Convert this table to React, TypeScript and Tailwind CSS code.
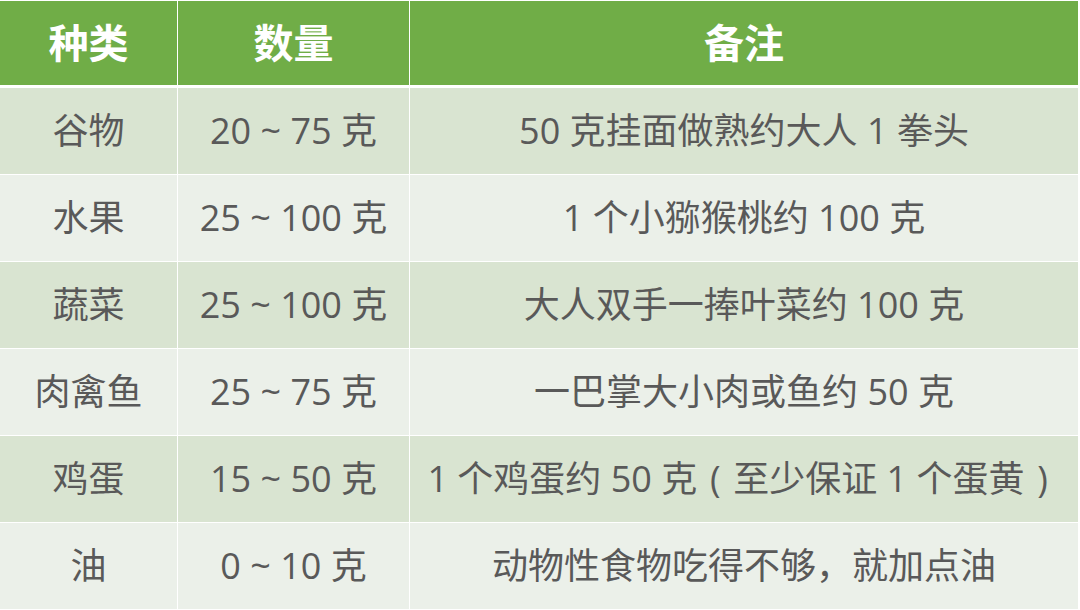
import React from 'react';

const Paren = ({ c }: { c: string }) => (
  <span className="inline-block w-[1em] text-center">{c}</span>
);

const rows: { kind: string; amount: string; note: React.ReactNode }[] = [
  { kind: '谷物', amount: '20 ~ 75 克', note: '50 克挂面做熟约大人 1 拳头' },
  { kind: '水果', amount: '25 ~ 100 克', note: '1 个小猕猴桃约 100 克' },
  { kind: '蔬菜', amount: '25 ~ 100 克', note: '大人双手一捧叶菜约 100 克' },
  { kind: '肉禽鱼', amount: '25 ~ 75 克', note: '一巴掌大小肉或鱼约 50 克' },
  {
    kind: '鸡蛋',
    amount: '15 ~ 50 克',
    note: (
      <>
        1 个鸡蛋约 50 克<Paren c="(" />至少保证 1 个蛋黄<Paren c=")" />
      </>
    ),
  },
  { kind: '油', amount: '0 ~ 10 克', note: '动物性食物吃得不够，就加点油' },
];

const font = { fontFamily: '"Open Sans", "Noto Sans CJK SC", sans-serif' };

export default function App() {
  return (
    <div className="w-[1080px] h-[610px] bg-white pt-[1px] pr-[2px]" style={font}>
      <div className="grid grid-cols-[177px_231px_1fr] gap-x-[1px] h-[84px] mb-[3px]">
        {['种类', '数量', '备注'].map((h) => (
          <div
            key={h}
            className="bg-[#70ad47] flex items-center justify-center text-white font-bold text-[40px] leading-none"
          >
            {h}
          </div>
        ))}
      </div>
      <div className="flex flex-col gap-y-[1px]">
        {rows.map((r, i) => {
          const bg = i % 2 === 0 ? 'bg-[#d9e4d1]' : 'bg-[#ebf0e9]';
          return (
            <div key={r.kind} className="grid grid-cols-[177px_231px_1fr] gap-x-[1px] h-[86px]">
              <div className={`flex items-center justify-center text-[36px] text-[#595959] leading-none ${bg}`}>
                {r.kind}
              </div>
              <div className={`flex items-center justify-center text-[36px] text-[#595959] leading-none ${bg}`}>
                {r.amount}
              </div>
              <div className={`flex items-center justify-center text-[36px] text-[#595959] leading-none whitespace-nowrap ${bg}`}>
                <span>{r.note}</span>
              </div>
            </div>
          );
        })}
      </div>
    </div>
  );
}
